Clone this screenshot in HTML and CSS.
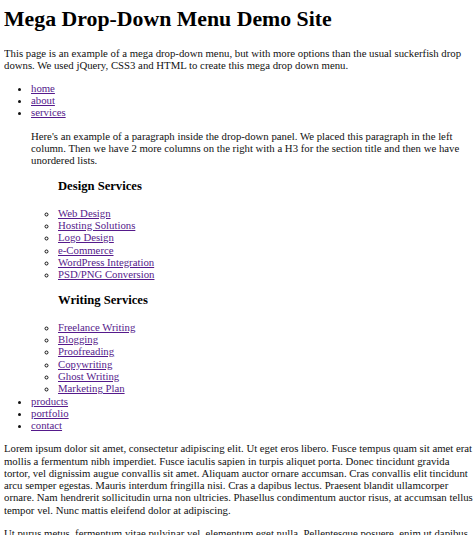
FILE: index.html
```html
<!DOCTYPE html>
<html>
<head>
<meta charset="utf-8">
<title>Mega Drop-Down Menu Demo Site</title>
<link rel="stylesheet" href="styles.css">
</head>
<body class="page">
<h1 class="title">Mega Drop-Down Menu Demo Site</h1>
<p class="text">This page is an example of a mega drop-down menu, but with more options than the usual suckerfish drop downs. We used jQuery, CSS3 and HTML to create this mega drop down menu.</p>
<ul class="menu">
  <li><a class="link" href="#">home</a></li>
  <li><a class="link" href="#">about</a></li>
  <li><a class="link" href="#">services</a>
    <div class="panel">
      <p class="text">Here's an example of a paragraph inside the drop-down panel. We placed this paragraph in the left column. Then we have 2 more columns on the right with a H3 for the section title and then we have unordered lists.</p>
      <h3 class="section">Design Services</h3>
      <ul class="sub">
        <li><a class="link" href="#">Web Design</a></li>
        <li><a class="link" href="#">Hosting Solutions</a></li>
        <li><a class="link" href="#">Logo Design</a></li>
        <li><a class="link" href="#">e-Commerce</a></li>
        <li><a class="link" href="#">WordPress Integration</a></li>
        <li><a class="link" href="#">PSD/PNG Conversion</a></li>
      </ul>
      <h3 class="section">Writing Services</h3>
      <ul class="sub">
        <li><a class="link" href="#">Freelance Writing</a></li>
        <li><a class="link" href="#">Blogging</a></li>
        <li><a class="link" href="#">Proofreading</a></li>
        <li><a class="link" href="#">Copywriting</a></li>
        <li><a class="link" href="#">Ghost Writing</a></li>
        <li><a class="link" href="#">Marketing Plan</a></li>
      </ul>
    </div>
  </li>
  <li><a class="link" href="#">products</a></li>
  <li><a class="link" href="#">portfolio</a></li>
  <li><a class="link" href="#">contact</a></li>
</ul>
<p class="text">Lorem ipsum dolor sit amet, consectetur adipiscing elit. Ut eget eros libero. Fusce tempus quam sit amet erat mollis a fermentum nibh imperdiet. Fusce iaculis sapien in turpis aliquet porta. Donec tincidunt gravida tortor, vel dignissim augue convallis sit amet. Aliquam auctor ornare accumsan. Cras convallis elit tincidunt arcu semper egestas. Mauris interdum fringilla nisi. Cras a dapibus lectus. Praesent blandit ullamcorper ornare. Nam hendrerit sollicitudin urna non ultricies. Phasellus condimentum auctor risus, at accumsan tellus tempor vel. Nunc mattis eleifend dolor at adipiscing.</p>
<p class="text">Ut purus metus, fermentum vitae pulvinar vel, elementum eget nulla. Pellentesque posuere, enim ut dapibus ultrices, dolor nisl rhoncus mauris, vitae volutpat odio nulla vel sem. Sed ac lorem sapien. Integer ut lacus nec dolor pretium tincidunt.</p>
</body>
</html>
```
FILE: styles.css
```css
html {
  background: #ffffff;
}
.page {
  margin: 0 0 0 4px;
  font-family: "Liberation Serif", "Times New Roman", serif;
  font-size: 10.75px;
  line-height: 12.3px;
  color: #111111;
}
.title {
  font-size: 21.8px;
  line-height: 25px;
  font-weight: bold;
  margin: 7px 0 14.5px 0;
  color: #000000;
}
.text {
  margin: 10.8px 0;
}
.menu {
  margin: 10.8px 0;
  padding-left: 27px;
  list-style: disc;
}
.sub {
  margin: 0;
  padding-left: 27px;
  list-style: circle;
}
.section {
  font-size: 12.64px;
  line-height: 15px;
  font-weight: bold;
  margin: 12.64px 0 12.64px 27px;
  color: #000000;
}
.link {
  color: #551a8b;
  text-decoration: underline;
}
```
